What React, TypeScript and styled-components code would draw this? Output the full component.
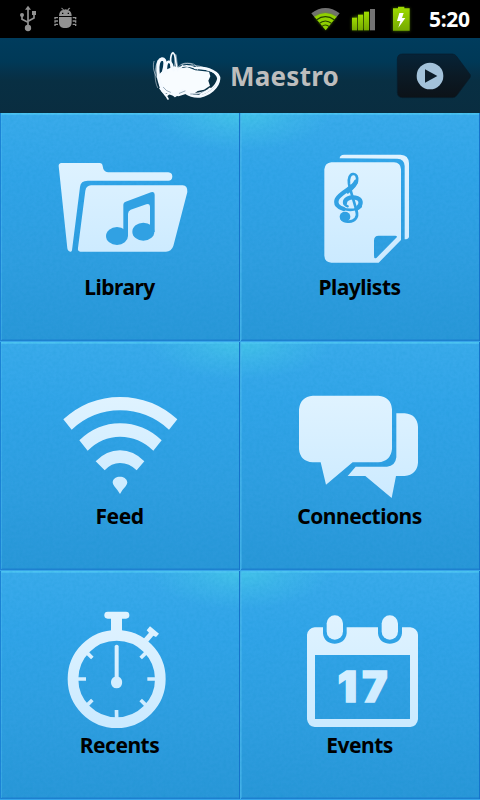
import React from "react";
import styled, { createGlobalStyle } from "styled-components";

const GlobalStyle = createGlobalStyle`
  * { box-sizing: border-box; }
  body { margin: 0; background: #000; }
`;

const Screen = styled.div`
  width: 480px;
  height: 800px;
  display: flex;
  flex-direction: column;
  overflow: hidden;
  font-family: "Noto Sans", "Open Sans", sans-serif;
  font-weight: 700;
`;

const StatusBar = styled.div`
  height: 38px;
  flex: none;
  background: #000;
  display: flex;
  align-items: center;
  justify-content: space-between;
`;

const StatusGroup = styled.div`
  display: flex;
  align-items: center;
`;

const Clock = styled.span`
  width: 42px;
  margin: 0 9px 0 10px;
  color: #fff;
  font-size: 21px;
  line-height: 38px;
  letter-spacing: -0.3px;
  white-space: nowrap;
`;

const Header = styled.header`
  height: 75px;
  flex: none;
  display: flex;
  align-items: center;
  padding: 0 8px 0 150px;
  background: linear-gradient(#003c5d 0%, #003957 32%, #05334c 45%, #082f43 57%, #092d40 100%);
`;

const Title = styled.h1`
  margin: 0 auto 0 8px;
  color: #bdbdbd;
  font-size: 26px;
  line-height: 36px;
  letter-spacing: 0.25px;
`;

const PlayButton = styled.button`
  display: flex;
  padding: 0;
  border: 0;
  background: none;
`;

const Grid = styled.main`
  display: grid;
  grid-template-columns: 240px 240px;
  grid-auto-rows: 229px;
`;

const Tile = styled.section<{ $side: "left" | "right" }>`
  position: relative;
  display: flex;
  flex-direction: column;
  align-items: center;
  padding-top: 30px;
  border-bottom: 1px solid #37a5ea;
  background:
    radial-gradient(ellipse 92px 38px at ${(p) => (p.$side === "left" ? "100%" : "0%")} 0,
      rgba(70, 200, 233, 0.85), rgba(70, 200, 233, 0.35) 50%, rgba(70, 200, 233, 0) 100%),
    linear-gradient(#3aabeb 0%, #31a4e8 28%, #2f9ee0 65%, #2997d8 100%);
  box-shadow:
    inset 1px 0 ${(p) => (p.$side === "left" ? "#1d83d6" : "#43b1e9")},
    inset -1px 0 #1673cb,
    inset 0 1px #4cc3f0,
    inset 0 -1px #1f80d0,
    inset 2px 0 rgba(80, 190, 240, 0.4),
    inset 0 2px rgba(80, 200, 245, 0.6),
    inset 0 -2px #238bd4;
`;

const Grain = styled.svg`
  position: absolute;
  inset: 0;
  width: 240px;
  height: 228px;
  opacity: 0.1;
  pointer-events: none;
`;

const TileIcon = styled.svg`
  position: relative;
  width: 140px;
  height: 130px;
  flex: none;
`;

const Label = styled.div`
  position: relative;
  margin-right: 1px;
  color: #000;
  font-size: 21px;
  line-height: 29px;
  letter-spacing: -0.5px;
  white-space: nowrap;
`;

const BLUE = "#31a1e3";
const FILL = "url(#ice)";

function Library() {
  return (
    <>
      <path d="M64 69H179Q187 69 188 78Q190 96 204 97H385Q397 98 397 110Q396 122 385 122H143Q122 122 120 141L96 331Q95 336 91 335Q83 334 82 325L56 78Q56 70 64 69Z" />
      <path d="M153 136H428Q443 137 442 156L400 318Q394 335 378 335H121Q112 334 114 324L136 152Q139 137 153 136Z" />
      <g fill={BLUE}>
        <ellipse cx="231" cy="288" rx="33" ry="27" />
        <ellipse cx="310" cy="275" rx="33" ry="27" />
        <path d="M250 288V194Q250 187 257 185L333 157Q344 153 344 164V276H330V200Q330 189 319 193L272 209Q264 213 264 222V288Z" />
      </g>
    </>
  );
}

function Playlists() {
  return (
    <>
      <path d="M119 55Q120 44 132 44H302Q326 45 327 70V291Q325 298 314 298V78Q313 57 292 56Z" />
      <path fillRule="evenodd" d="M94 67H282Q302 68 303 88V300L236 368H94Q74 366 73 347V88Q75 69 94 67ZM236 287Q222 287 222 302V347Q222 359 230 353L291 291Q291 287 286 287Z" />
      <g fill="none" stroke={BLUE} strokeLinecap="round">
        <path strokeWidth="8" d="M170 214C161 180 151 151 147 131C145 114 150 103 159 102C169 101 173 111 171 123C168 138 157 147 143 157" />
        <path strokeWidth="13" d="M168 125C163 143 124 155 111 177C104 192 114 202 131 207" />
        <path strokeWidth="8" d="M116 199C133 213 169 213 182 200" />
        <path strokeWidth="13" d="M174 203C186 192 185 176 166 173C149 170 134 178 135 188" />
        <path strokeWidth="7" d="M133 185C132 193 137 197 143 199" />
        <path strokeWidth="8" d="M170 214C175 232 164 244 147 245C137 246 130 243 125 237" />
      </g>
      <ellipse fill={BLUE} cx="135" cy="230" rx="16" ry="15" />
    </>
  );
}

function Feed() {
  return (
    <>
      <path d="M70 118Q144 51 240 51Q338 51 412 118L387 149Q323 91 240 91Q158 91 95 149Z" />
      <path d="M118 181Q171 130 240 130Q311 130 365 181L340 212Q297 170 240 170Q185 170 143 212Z" />
      <path d="M167 244Q199 211 240 211Q281 211 313 244L290 271Q268 249 240 249Q214 249 194 271Z" />
      <path d="M240 342Q231 328 223 319Q218 313 218 307C220 285 259 285 262 307Q262 313 257 319Q248 328 240 342Z" />
    </>
  );
}

function Connections() {
  return (
    <>
      <path d="M98 47H295Q333 50 336 88V207Q332 244 295 247H218L138 314L122 247H98Q60 244 57 207V88Q61 50 98 47Z" />
      <path d="M349 100H374Q411 103 414 140V248Q411 284 374 288H348L335 354L256 288H203L227 260H321Q346 258 349 232Z" />
    </>
  );
}

function Recents() {
  return (
    <>
      <circle cx="200" cy="237" r="131" fill="none" stroke={FILL} strokeWidth="32" />
      <rect x="163" y="35" width="75" height="21" rx="10" />
      <path d="M183 50H216V96H183ZM281 116L297 98L290 91L300 79L327 101L318 111L310 107L294 126Z" />
      <g stroke={FILL} strokeWidth="11">
        <path d="M84 237H108M292 237H316M199.500 330L200 356M110 157L127 174M289 157L272 174M110 317L127 300M289 317L272 300" />
      </g>
      <path d="M194 138Q200 130 206 138V230C221 235 221 264 200 265C179 264 178 235 194 230Z" />
    </>
  );
}

function Events() {
  return (
    <>
      <path fillRule="evenodd" d="M74 82H99V100C102 142 166 142 170 100V82H264V100C267 142 332 142 336 100V82H361Q381 84 384 104V358Q381 379 361 381H74Q54 379 51 358V104Q55 84 74 82ZM75 165V357H360V165Z" />
      <rect x="110" y="46" width="49" height="73" rx="24.500" />
      <rect x="275" y="46" width="49" height="73" rx="24.500" />
      <text x="143" y="307" fontFamily="Inter, sans-serif" fontWeight="900" fontSize="127" textLength="149" lengthAdjust="spacing" stroke={FILL} strokeWidth="5">17</text>
    </>
  );
}

const tiles = [
  { name: "Library", view: "30 9 420 390", Art: Library },
  { name: "Playlists", view: "-30 9 420 390", Art: Playlists },
  { name: "Feed", view: "30 -24 420 390", Art: Feed },
  { name: "Connections", view: "30 -24 420 390", Art: Connections },
  { name: "Recents", view: "0 3 420 390", Art: Recents },
  { name: "Events", view: "0 3 420 390", Art: Events },
];

function StatusLeft() {
  return (
    <svg width="90" height="38" viewBox="0 0 270 114" fill="#929292">
      <g fill="none" stroke="#929292" strokeWidth="5">
        <path d="M84 84V25M84 67L66 58V46M84 64L102 54V42" />
      </g>
      <path d="M84 17L93 29H75Z" />
      <circle cx="84" cy="84" r="9.500" />
      <circle cx="66" cy="45" r="6" />
      <rect x="96" y="33" width="12" height="12" />
      <path d="M177 48Q178 32 189 30L183 24L186 23L192 29Q197 27 202 29L207 23L211 24L205 31Q215 35 215 48ZM177 51H215V69Q214 83 200 84H191Q178 82 177 70Z" />
      <path fill="none" stroke="#929292" strokeWidth="4" d="M174 53H165V58M174 63H165V68M174 73H165V78M218 53H227V58M218 63H227V68M218 73H227V78" />
      <path fill="#000" d="M186 38h4v4h-4zM203 38h4v4h-4z" />
    </svg>
  );
}

function StatusRight() {
  return (
    <svg width="109" height="38" viewBox="210 0 327 114">
      <defs>
        <linearGradient id="green" x1="0" y1="0" x2="0" y2="1">
          <stop offset="0" stopColor="#9fdc00" />
          <stop offset="1" stopColor="#75a900" />
        </linearGradient>
        <filter id="halo" x="-20%" y="-20%" width="140%" height="140%">
          <feGaussianBlur stdDeviation="4" />
        </filter>
      </defs>
      <path fill="#717171" d="M214 40Q256 8 299 40L288 53Q256 32 225 53Z" />
      <path fill="#669b00" opacity=".55" filter="url(#halo)" d="M223 50Q256 26 290 50L257 91ZM335 53L388 35V91H335ZM458 24H509V94H458Z" />
      <path fill="#8fd000" d="M223 50Q256 28 290 50L257 91Z" />
      <path fill="none" stroke="#254000" strokeWidth="3.500" d="M229 60Q256 40 284 60M237 71Q256 55 276 71M245 80Q256 70 268 80" />
      <path fill="url(#green)" d="M336 53H351V91H336Z" />
      <path fill="url(#green)" d="M354 44H369V91H354Z" />
      <path fill="url(#green)" d="M372 35H387V91H372Z" />
      <path fill="#737373" d="M390 27H405V91H390Z" />
      <path fill="url(#green)" d="M459 25H474V20H493V25H509V92H459Z" />
      <path fill="#fff" d="M478 39H491L486 54H496L475 83L481 63H471Z" />
    </svg>
  );
}

function Logo() {
  return (
    <svg width="72" height="60" viewBox="30 18 216 180" fill="none" stroke="#f5faff" strokeLinecap="round" strokeLinejoin="round">
      <path fill="#f8fcff" stroke="none" d="M55 106L64 96L76 90L90 84L104 79L120 85L143 82L166 91L207 95L211 109L205 122L210 137L192 149L173 153L157 165L137 162L116 169L95 166L75 159L58 137Z" />
      <path strokeWidth="10" d="M69 152C51 116 47 60 66 57C79 56 76 78 70 98" />
      <path strokeWidth="8" d="M78 96C76 70 83 61 91 67C98 74 96 84 101 90" />
      <path strokeWidth="5" d="M94 86C90 66 91 42 99 38C109 42 105 72 113 92" />
      <path strokeWidth="3" opacity=".5" d="M61 126C38 103 38 75 42 64M53 143C40 117 45 78 54 61M103 88C105 58 104 41 108 44C111 55 109 75 117 88M110 90C118 70 136 64 158 74M125 74C148 66 172 68 173 90M130 88C150 73 173 73 195 85" />
      <path strokeWidth="5" d="M112 90C122 74 147 76 164 83M68 149L84 177M60 145L78 168L94 155M87 154L105 169L122 158M114 89L128 78" />
      <path strokeWidth="8" d="M166 84C206 81 239 99 237 117C235 143 207 164 180 169C158 171 147 165 137 158" />
      <path strokeWidth="5" d="M133 153C158 169 196 159 210 145M179 84C211 88 231 99 234 116C229 140 203 158 181 164M67 137C79 162 111 165 129 150" />
      <path stroke="#2b506b" strokeWidth="2" opacity=".7" d="M70 142Q78 154 91 157M118 160L135 153M152 162L177 162L199 149" />
    </svg>
  );
}

function PlayArrow() {
  return (
    <svg width="76" height="46" viewBox="0 0 228 138">
      <defs>
        <linearGradient id="btn" x1="0" y1="0" x2="0" y2="1">
          <stop offset="0" stopColor="#062337" />
          <stop offset=".5" stopColor="#0b1a25" />
          <stop offset="1" stopColor="#0c1218" />
        </linearGradient>
      </defs>
      <path fill="url(#btn)" stroke="#071d2c" strokeWidth="2" d="M20 3H169Q176 3 181 9L222 64Q225 69 222 74L182 128Q177 134 169 134H20Q4 134 4 118V19Q4 3 20 3Z" />
      <circle cx="102" cy="69" r="40" fill="#a3c2da" />
      <path fill="#0c1c29" d="M87 49L124 69L87 89Z" />
    </svg>
  );
}

export default function App() {
  return (
    <Screen>
      <GlobalStyle />
      <StatusBar>
        <StatusLeft />
        <StatusGroup>
          <StatusRight />
          <Clock>5:20</Clock>
        </StatusGroup>
      </StatusBar>
      <Header>
        <Logo />
        <Title>Maestro</Title>
        <PlayButton aria-label="Play">
          <PlayArrow />
        </PlayButton>
      </Header>
      <Grid>
        {tiles.map(({ name, view, Art }, i) => (
          <Tile key={name} $side={i % 2 ? "right" : "left"}>
            <Grain>
              <filter id={`grain${i}`}>
                <feTurbulence type="fractalNoise" baseFrequency="0.3" numOctaves="2" seed={i} />
                <feColorMatrix values="0 0 0 0 0  0 0 0 0 .25  0 0 0 0 .5  2 0 0 0 -.7" />
              </filter>
              <rect width="240" height="228" filter={`url(#grain${i})`} />
            </Grain>
            <TileIcon viewBox={view} fill={FILL}>
              <defs>
                <linearGradient id="ice" gradientUnits="userSpaceOnUse" x1="0" y1="40" x2="0" y2="370">
                  <stop offset="0" stopColor="#e0f3ff" />
                  <stop offset="1" stopColor="#cbeaff" />
                </linearGradient>
              </defs>
              <Art />
            </TileIcon>
            <Label>{name}</Label>
          </Tile>
        ))}
      </Grid>
    </Screen>
  );
}
